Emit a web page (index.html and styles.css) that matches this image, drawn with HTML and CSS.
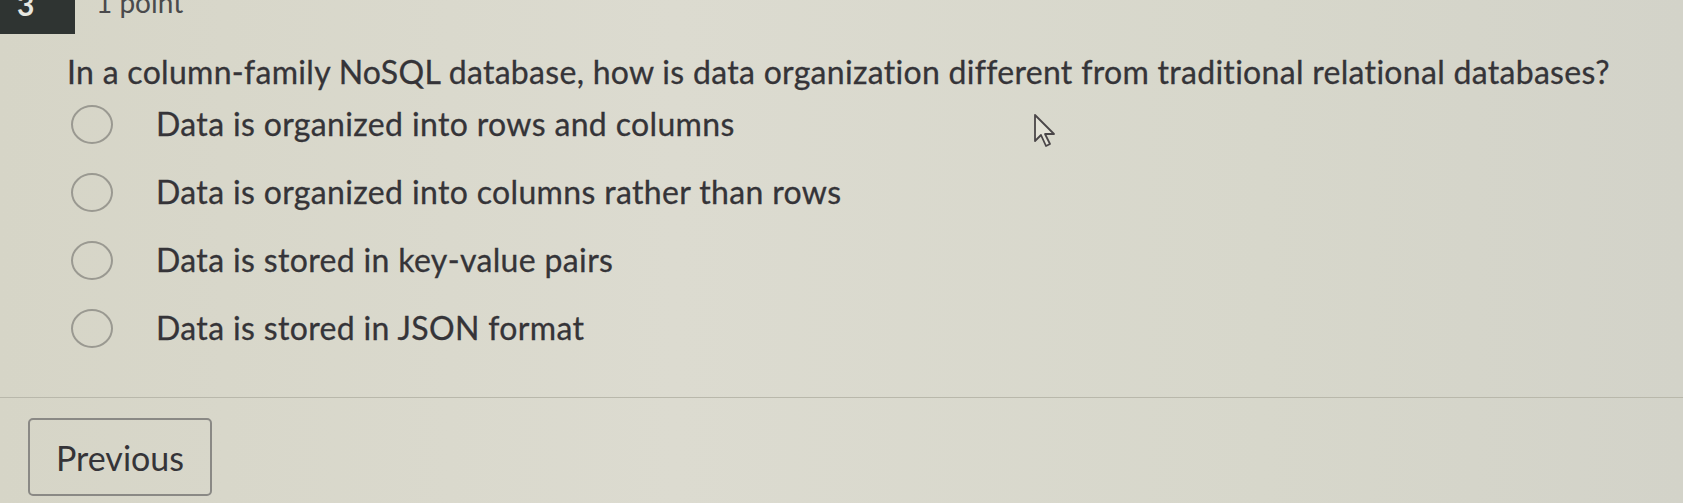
FILE: index.html
```html
<!DOCTYPE html>
<html>
<head>
<meta charset="utf-8">
<link rel="stylesheet" href="styles.css">
</head>
<body>
<div class="page">
  <div class="header">
    <div class="badge"><span class="num">3</span></div>
    <div class="points">1 point</div>
  </div>
  <div class="question">In a column-family NoSQL database, how is data organization different from traditional relational databases?</div>
  <div class="options">
    <div class="option"><span class="radio"></span><span class="label">Data is organized into rows and columns</span></div>
    <div class="option"><span class="radio"></span><span class="label">Data is organized into columns rather than rows</span></div>
    <div class="option"><span class="radio"></span><span class="label">Data is stored in key-value pairs</span></div>
    <div class="option"><span class="radio"></span><span class="label">Data is stored in JSON format</span></div>
  </div>
  <div class="divider"></div>
  <div class="footer">
    <button class="prev">Previous</button>
  </div>
  <svg class="cursor" width="26" height="36" viewBox="0 0 26 36">
    <path d="M2 2 L2 28 L8 22 L13 33 L17 31 L12 21 L21 21 Z" fill="#e4e3d8" stroke="#4a4648" stroke-width="1.8" stroke-linejoin="round"/>
  </svg>
</div>
</body>
</html>
```

FILE: styles.css
```css
html, body {
  margin: 0;
  padding: 0;
}
body {
  background: #d8d8cb;
  font-family: Lato, "Open Sans", sans-serif;
  color: #353438;
  width: 1683px;
  height: 503px;
  overflow: hidden;
}
.page {
  position: relative;
  height: 503px;
  background: linear-gradient(90deg, #d6d5c7 0%, #dcdbd0 40%, #d7d7cb 75%, #d3d3c9 100%);
}
.header {
  display: flex;
  align-items: flex-start;
  height: 35px;
  overflow: hidden;
}
.badge {
  width: 75px;
  height: 34px;
  background: #2f3432;
  color: #e7e7e0;
  font-weight: 700;
  font-size: 30px;
  overflow: hidden;
}
.num {
  display: block;
  margin-left: 17px;
  margin-top: -14px;
  line-height: 36px;
}
.points {
  margin-left: 21px;
  margin-top: -16px;
  font-size: 28px;
  line-height: 36px;
  color: #4a4a4c;
}
.question {
  margin-top: 17px;
  margin-left: 67px;
  font-size: 32px;
  letter-spacing: 0.3px;
  line-height: 40px;
  white-space: nowrap;
  -webkit-text-stroke: 0.3px #353438;
}
.options {
  margin-left: 71px;
  margin-top: 12px;
  display: flex;
  flex-direction: column;
  gap: 28px;
}
.option {
  display: flex;
  align-items: center;
  height: 40px;
}
.radio {
  width: 42px;
  height: 39px;
  border: 2px solid #9a9991;
  border-radius: 50%;
  box-sizing: border-box;
  flex: none;
}
.label {
  margin-left: 43px;
  font-size: 32px;
  letter-spacing: 0.35px;
  line-height: 40px;
  white-space: nowrap;
  -webkit-text-stroke: 0.3px #353438;
}
.divider {
  margin-top: 49px;
  height: 1px;
  background: #b9b8ab;
}
.footer {
  padding-top: 20px;
  padding-left: 28px;
}
.prev {
  width: 184px;
  height: 78px;
  border: 2px solid #8a8985;
  border-radius: 5px;
  background: transparent;
  font-family: Lato, "Open Sans", sans-serif;
  font-size: 34px;
  color: #353438;
  padding: 0;
}
.cursor {
  position: absolute;
  left: 1033px;
  top: 113px;
}
```
